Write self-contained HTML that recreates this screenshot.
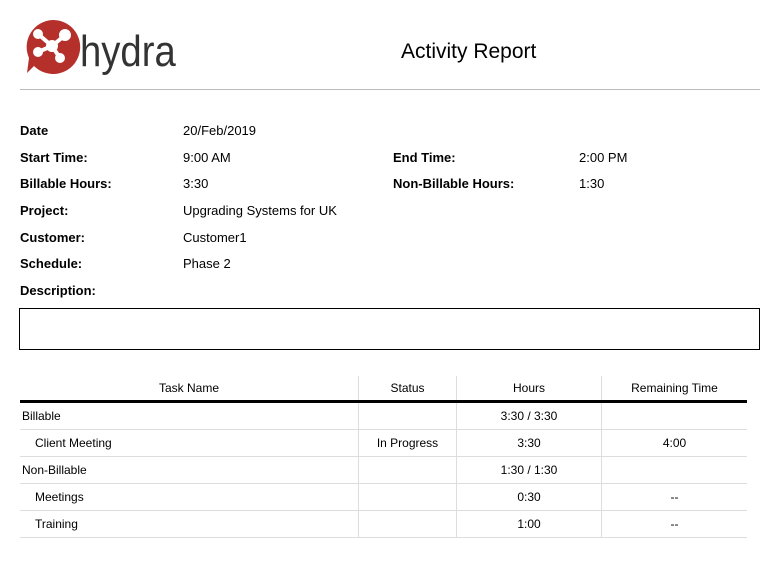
<!DOCTYPE html>
<html><head><style>
body{margin:0;width:771px;height:587px;background:#fff;font-family:"Liberation Sans",Arial,sans-serif;color:#000;position:relative;overflow:hidden}
.a{position:absolute;font-size:13px;white-space:nowrap}
.b{font-weight:bold}
table{position:absolute;left:20px;top:376px;width:727px;border-collapse:collapse;font-size:12px}
td,th{font-weight:normal;height:26px;padding:0;border-right:1px solid #ddd;border-bottom:1px solid #ddd;text-align:center}
td:last-child,th:last-child{border-right:none}
th{border-bottom:3px solid #000;height:24px}
td.l{text-align:left;padding-left:2px}
td.i{text-align:left;padding-left:15px}
</style></head><body>
<svg style="position:absolute;left:24px;top:18px" width="58" height="58" viewBox="0 0 58 58">
<path d="M29 2 A27 27 0 1 1 10 48 L3 55 L5 40 A27 27 0 0 1 29 2Z" fill="#b5302b"/>
<g fill="#fff" stroke="#fff" stroke-width="4" stroke-linecap="round">
<line x1="14" y1="16" x2="28" y2="28"/><line x1="14" y1="34" x2="28" y2="28"/><line x1="28" y1="28" x2="40" y2="18"/><line x1="28" y1="28" x2="36" y2="40"/>
<circle cx="14" cy="16" r="3"/><circle cx="14" cy="34" r="3"/><circle cx="41" cy="17" r="4"/><circle cx="36" cy="40" r="3"/><circle cx="28" cy="28" r="4"/>
</g></svg>
<div class="a" style="left:80px;top:30px;font-size:44px;line-height:1;color:#333;transform:scaleX(0.87);transform-origin:left">hydra</div>
<div class="a" style="left:401px;top:40px;font-size:21px">Activity Report</div>
<div style="position:absolute;left:20px;top:89px;width:740px;height:1px;background:#bbb"></div>
<div class="a b" style="left:20px;top:123px">Date</div><div class="a" style="left:183px;top:123px">20/Feb/2019</div>
<div class="a b" style="left:20px;top:150px">Start Time:</div><div class="a" style="left:183px;top:150px">9:00 AM</div>
<div class="a b" style="left:393px;top:150px">End Time:</div><div class="a" style="left:579px;top:150px">2:00 PM</div>
<div class="a b" style="left:20px;top:176px">Billable Hours:</div><div class="a" style="left:183px;top:176px">3:30</div>
<div class="a b" style="left:393px;top:176px">Non-Billable Hours:</div><div class="a" style="left:579px;top:176px">1:30</div>
<div class="a b" style="left:20px;top:203px">Project:</div><div class="a" style="left:183px;top:203px">Upgrading Systems for UK</div>
<div class="a b" style="left:20px;top:230px">Customer:</div><div class="a" style="left:183px;top:230px">Customer1</div>
<div class="a b" style="left:20px;top:256px">Schedule:</div><div class="a" style="left:183px;top:256px">Phase 2</div>
<div class="a b" style="left:20px;top:283px">Description:</div>
<div style="position:absolute;left:19px;top:308px;width:739px;height:40px;border:1px solid #000"></div>
<table>
<tr><th style="width:338px">Task Name</th><th style="width:97px">Status</th><th style="width:144px">Hours</th><th>Remaining Time</th></tr>
<tr><td class="l">Billable</td><td></td><td>3:30 / 3:30</td><td></td></tr>
<tr><td class="i">Client Meeting</td><td>In Progress</td><td>3:30</td><td>4:00</td></tr>
<tr><td class="l">Non-Billable</td><td></td><td>1:30 / 1:30</td><td></td></tr>
<tr><td class="i">Meetings</td><td></td><td>0:30</td><td>--</td></tr>
<tr><td class="i">Training</td><td></td><td>1:00</td><td>--</td></tr>
</table>
</body></html>
